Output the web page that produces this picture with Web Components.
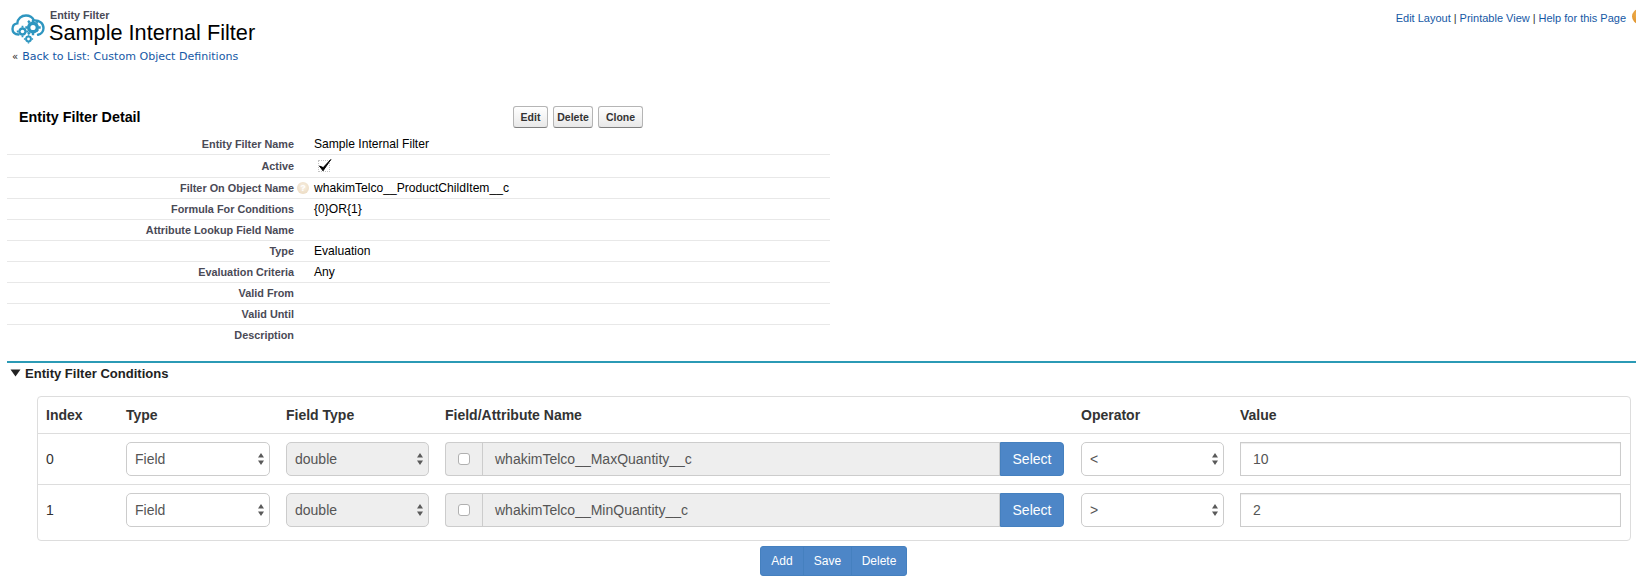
<!DOCTYPE html>
<html>
<head>
<meta charset="utf-8">
<style>
html, body { margin: 0; background: #fff; overflow: hidden; }
body { width: 1636px; height: 586px; font-family: "Liberation Sans", Arial, sans-serif; color: #000; }
</style>
</head>
<body>
<ef-page-header title-small="Entity Filter" title-main="Sample Internal Filter" back="Back to List: Custom Object Definitions"></ef-page-header>

<ef-detail heading="Entity Filter Detail">
  <ef-field label="Entity Filter Name">Sample Internal Filter</ef-field>
  <ef-field label="Active" check></ef-field>
  <ef-field label="Filter On Object Name" help>whakimTelco__ProductChildItem__c</ef-field>
  <ef-field label="Formula For Conditions">{0}OR{1}</ef-field>
  <ef-field label="Attribute Lookup Field Name"></ef-field>
  <ef-field label="Type">Evaluation</ef-field>
  <ef-field label="Evaluation Criteria">Any</ef-field>
  <ef-field label="Valid From"></ef-field>
  <ef-field label="Valid Until"></ef-field>
  <ef-field label="Description" last></ef-field>
</ef-detail>

<ef-conditions heading="Entity Filter Conditions">
  <ef-condition index="0" type="Field" ftype="double" name="whakimTelco__MaxQuantity__c" op="&lt;" value="10"></ef-condition>
  <ef-condition index="1" type="Field" ftype="double" name="whakimTelco__MinQuantity__c" op="&gt;" value="2"></ef-condition>
</ef-conditions>

<script>
const FONT = '"Liberation Sans", Arial, sans-serif';

class EfPageHeader extends HTMLElement {
  constructor() {
    super();
    this.attachShadow({ mode: 'open' });
    this.shadowRoot.innerHTML = `
<style>
:host { display: flex; justify-content: space-between; align-items: flex-start; height: 92px; font-family: ${FONT}; }
.left { display: flex; flex-direction: column; padding: 9px 0 0 11px; }
.title { display: flex; gap: 4px; height: 41px; }
.title svg { margin-top: 1px; }
.text { padding-top: 1px; }
.small { font-size: 10.8px; font-weight: bold; color: #4a4a56; line-height: 11px; height: 11px; padding-left: 1px; }
.main { font-size: 21.7px; line-height: 23px; color: #000; }
.back { font: 11.05px/14px "DejaVu Sans", Verdana, sans-serif; color: #1558a5; padding-left: 1px; white-space: nowrap; }
.back i { font-style: normal; color: #222; font-size: 10px; margin-right: 4px; }
.links { display: flex; align-items: center; gap: 3px; font-size: 11px; line-height: 14px; color: #1558a5; padding-top: 11px; margin-right: -11px; white-space: nowrap; }
.links b { font-weight: normal; color: #333; }
.help { width: 15px; height: 15px; border-radius: 50%; background: radial-gradient(circle at 40% 35%, #f0b050, #d8861c); margin: -4px 0 0 3px; }
</style>
<div class="left">
  <div class="title">
    <svg width="34" height="34" viewBox="0 0 34 34" fill="none">
      <path d="M7.5 24.5C3.5 24.5 1.5 21.8 1.5 19C1.5 16 3.5 13.8 6.3 13.4C6.6 8.6 10.5 5.5 15 5.5C18.5 5.5 21.6 7.4 23 10.4C28.5 10 32.5 13.5 32.5 18C32.5 21.6 30 24.2 27 24.8" stroke="#2e96c0" stroke-width="2.4" stroke-linecap="round"/>
      <g fill="#2e96c0">
        <circle cx="22" cy="17.5" r="6"/><path d="M20.8 9.8h2.4v2.4h-2.4zM20.8 22.8h2.4v2.4h-2.4zM14.3 16.3h2.4v2.4h-2.4zM27.3 16.3h2.4v2.4h-2.4zM16.2 11.8l1.7-1.7 1.7 1.7-1.7 1.7zM24.4 20.4l1.7-1.7 1.7 1.7-1.7 1.7zM24.4 11.8l1.7-1.7 1.7 1.7-1.7 1.7zM16.2 23.2l1.7-1.7 1.7 1.7-1.7 1.7z"/>
        <circle cx="11.5" cy="21.5" r="4.2"/><path d="M10.6 15.8h1.8v1.8h-1.8zM10.6 25.4h1.8v1.8h-1.8zM5.8 20.6h1.8v1.8H5.8zM15.4 20.6h1.8v1.8h-1.8z"/>
        <circle cx="17.5" cy="29" r="3.4"/><path d="M16.8 24.4h1.4v1.4h-1.4zM16.8 32.2h1.4v1.4h-1.4zM12.9 28.3h1.4v1.4h-1.4zM20.7 28.3h1.4v1.4h-1.4z"/>
      </g>
      <g fill="#fff"><circle cx="22" cy="17.5" r="2.6"/><circle cx="11.5" cy="21.5" r="1.8"/><circle cx="17.5" cy="29" r="1.4"/></g>
    </svg>
    <div class="text">
      <div class="small" id="s"></div>
      <div class="main" id="m"></div>
    </div>
  </div>
  <div class="back"><i>«</i><span id="b"></span></div>
</div>
<div class="links"><span>Edit Layout</span><b>|</b><span>Printable View</span><b>|</b><span>Help for this Page</span><div class="help"></div></div>`;
  }
  connectedCallback() {
    const r = this.shadowRoot;
    r.getElementById('s').textContent = this.getAttribute('title-small');
    r.getElementById('m').textContent = this.getAttribute('title-main');
    r.getElementById('b').textContent = this.getAttribute('back');
  }
}

class EfButton extends HTMLElement {
  constructor() {
    super();
    this.attachShadow({ mode: 'open' });
    this.shadowRoot.innerHTML = `
<style>
:host { display: inline-flex; align-items: center; justify-content: center; box-sizing: border-box; height: 22px; font: bold 10.5px/1 ${FONT}; color: #333;
  border: 1px solid #b5b5b5; border-bottom-color: #7f7f7f; border-radius: 3px; background: linear-gradient(#fff, #f2f2f2 60%, #e8e8e8); }
</style><slot></slot>`;
  }
}

class EfDetail extends HTMLElement {
  constructor() {
    super();
    this.attachShadow({ mode: 'open' });
    this.shadowRoot.innerHTML = `
<style>
:host { display: block; font-family: ${FONT}; width: 823px; margin-left: 7px; }
.head { display: grid; grid-template-columns: 506px auto; align-items: center; box-sizing: border-box; height: 42px; padding-top: 8px; }
h2 { margin: 0; padding-left: 12px; font-size: 14.3px; font-weight: bold; line-height: 16px; }
.btns { display: flex; gap: 5px; }
</style>
<div class="head"><h2 id="h"></h2><div class="btns"><ef-button style="width:35px">Edit</ef-button><ef-button style="width:40px">Delete</ef-button><ef-button style="width:45px">Clone</ef-button></div></div>
<slot></slot>`;
  }
  connectedCallback() {
    this.shadowRoot.getElementById('h').textContent = this.getAttribute('heading');
  }
}

class EfField extends HTMLElement {
  constructor() {
    super();
    this.attachShadow({ mode: 'open' });
    this.shadowRoot.innerHTML = `
<style>
:host { display: grid; grid-template-columns: 287px 1fr; column-gap: 20px; align-items: center; box-sizing: border-box; height: 21px; border-bottom: 1px solid #e8e8e8; font-family: ${FONT}; }
:host([last]) { border-bottom: 0; height: 20px; }
:host([check]) { height: 23px; }
.label { position: relative; text-align: right; font-size: 10.85px; font-weight: bold; color: #4a4a56; white-space: nowrap; }
.value { font-size: 12.1px; color: #000; white-space: nowrap; display: flex; align-items: center; }
.q { position: absolute; right: -15px; top: 50%; margin-top: -6px; width: 12px; height: 12px; line-height: 12px; text-align: center; font-size: 9px; color: #fff; border-radius: 50%; background: radial-gradient(circle at 50% 40%, #f8f0e4, #e9d6ba); }
.box { box-sizing: border-box; position: relative; width: 12px; height: 12px; margin-left: 4px; border: 1px dotted #c4c4c4; }
.box svg { position: absolute; left: -1px; top: -3px; }
</style>
<div class="label"><span id="l"></span></div><div class="value"><slot></slot></div>`;
  }
  connectedCallback() {
    const r = this.shadowRoot;
    r.getElementById('l').textContent = this.getAttribute('label');
    if (this.hasAttribute('help')) {
      const q = document.createElement('div');
      q.className = 'q';
      q.textContent = '?';
      r.querySelector('.label').appendChild(q);
    }
    if (this.hasAttribute('check')) {
      r.querySelector('.value').innerHTML = '<div class="box"><svg width="14" height="14" viewBox="0 0 14 14"><path d="M1.5 8L5 12.8L12.8 1.5L5.2 9.6Z" fill="#000" stroke="#000" stroke-width="1" stroke-linejoin="round"/></svg></div>';
    }
  }
}

class EfSelect extends HTMLElement {
  constructor() {
    super();
    this.attachShadow({ mode: 'open' });
    this.shadowRoot.innerHTML = `
<style>
:host { display: flex; align-items: center; justify-content: space-between; box-sizing: border-box; height: 34px; padding: 0 4px 0 8px; border: 1px solid #ccc; border-radius: 5px; background: #fff; color: #555; font: 14px/20px ${FONT}; }
:host([disabled]) { background: #eee; }
svg { display: block; }
</style>
<slot></slot>
<svg width="8" height="14" viewBox="0 0 8 14"><path d="M4 1L7 5.5H1ZM4 13L1 8.5H7Z" fill="#5a5a5a"/></svg>`;
  }
}

class EfCondition extends HTMLElement {
  constructor() {
    super();
    this.attachShadow({ mode: 'open' });
    this.shadowRoot.innerHTML = `
<style>
:host { display: grid; grid-template-columns: var(--cols); align-items: center; height: 51px; box-sizing: border-box; border-top: 1px solid #ddd; font: 14px/20px ${FONT}; color: #333; }
.cell { padding: 0 8px; }
.cell.wide { padding-right: 9px; }
.group { display: flex; height: 34px; box-sizing: border-box; }
.addon { box-sizing: border-box; width: 37px; display: flex; align-items: center; justify-content: center; background: #eee; border: 1px solid #ccc; border-right: 0; border-radius: 4px 0 0 4px; }
.addon span { display: block; box-sizing: border-box; width: 12px; height: 12px; background: #fff; border: 1px solid #b0b0b0; border-radius: 3px; }
.name { flex: 1; display: flex; align-items: center; padding: 0 12px; background: #eee; border: 1px solid #ccc; color: #555; }
.sel { width: 64px; display: flex; align-items: center; justify-content: center; box-sizing: border-box; background: #4d86c7; border: 1px solid #4580bf; border-radius: 0 4px 4px 0; color: #fff; }
.input { box-sizing: border-box; height: 34px; display: flex; align-items: center; padding: 0 12px; border: 1px solid #ccc; color: #555; background: #fff; box-shadow: inset 0 1px 1px rgba(0,0,0,.075); }
</style>
<div class="cell" id="i"></div>
<div class="cell"><ef-select id="t"></ef-select></div>
<div class="cell"><ef-select id="f" disabled></ef-select></div>
<div class="cell wide"><div class="group"><div class="addon"><span></span></div><div class="name" id="n"></div><div class="sel">Select</div></div></div>
<div class="cell"><ef-select id="o"></ef-select></div>
<div class="cell"><div class="input" id="v"></div></div>`;
  }
  connectedCallback() {
    const r = this.shadowRoot;
    const map = { i: 'index', t: 'type', f: 'ftype', n: 'name', o: 'op', v: 'value' };
    Object.keys(map).forEach(id => { r.getElementById(id).textContent = this.getAttribute(map[id]); });
  }
}

class EfConditions extends HTMLElement {
  constructor() {
    super();
    this.attachShadow({ mode: 'open' });
    this.shadowRoot.innerHTML = `
<style>
:host { display: block; --cols: 80px 160px 159px 636px 159px 397px; margin: 16px 0 0 7px; border-top: 2px solid #2b9ab5; font-family: ${FONT}; }
.sec { display: flex; align-items: center; gap: 4px; height: 20px; padding-left: 3px; font-size: 13.05px; font-weight: bold; color: #222; }
.panel { margin: 13px 5px 0 30px; box-sizing: border-box; border: 1px solid #ddd; border-radius: 4px; padding-bottom: 5px; }
.th { display: grid; grid-template-columns: var(--cols); align-items: center; height: 36px; font-size: 14px; font-weight: bold; color: #333; }
.th div { padding: 0 8px; }
.bar { display: flex; justify-content: center; margin-top: 5px; padding-left: 25px; }
.bar div { height: 30px; box-sizing: border-box; display: flex; align-items: center; justify-content: center; background: #4d86c7; border: 1px solid #4580bf; color: #fff; font-size: 12px; margin-left: -1px; }
.bar div:first-child { border-radius: 3px 0 0 3px; }
.bar div:last-child { border-radius: 0 3px 3px 0; }
</style>
<div class="sec"><svg width="11" height="8" viewBox="0 0 11 8"><path d="M0.5 0.5H10.5L5.5 7.5Z" fill="#222"/></svg><span id="h"></span></div>
<div class="panel">
  <div class="th"><div>Index</div><div>Type</div><div>Field Type</div><div>Field/Attribute Name</div><div>Operator</div><div>Value</div></div>
  <slot></slot>
</div>
<div class="bar"><div style="width:44px">Add</div><div style="width:49px">Save</div><div style="width:56px">Delete</div></div>`;
  }
  connectedCallback() {
    this.shadowRoot.getElementById('h').textContent = this.getAttribute('heading');
  }
}

customElements.define('ef-page-header', EfPageHeader);
customElements.define('ef-button', EfButton);
customElements.define('ef-detail', EfDetail);
customElements.define('ef-field', EfField);
customElements.define('ef-select', EfSelect);
customElements.define('ef-condition', EfCondition);
customElements.define('ef-conditions', EfConditions);
</script>
</body>
</html>
